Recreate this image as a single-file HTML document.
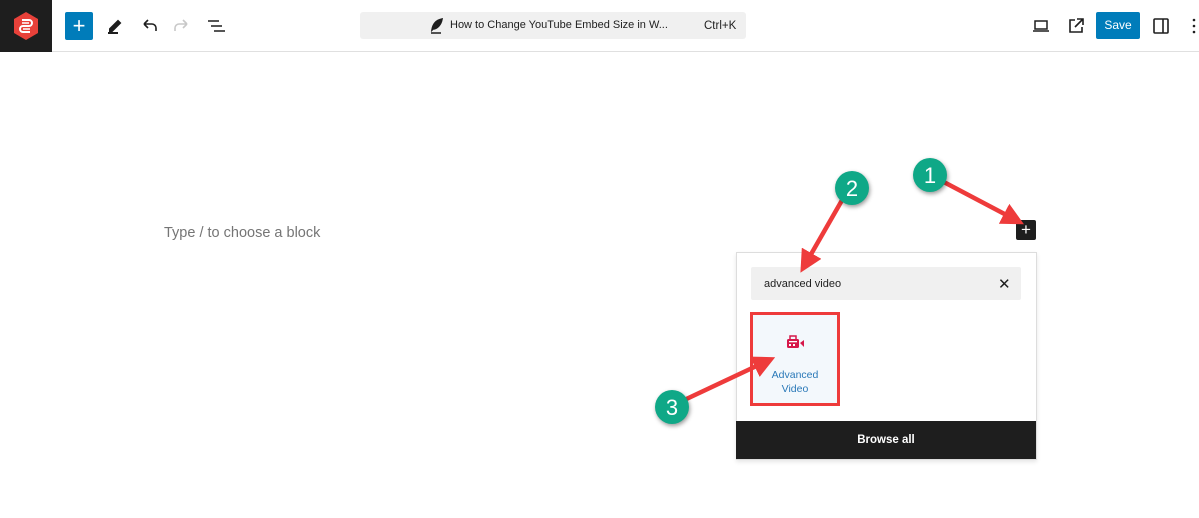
<!DOCTYPE html>
<html><head><style>
body{margin:0;width:1199px;height:518px;background:#fff;font-family:"Liberation Sans",sans-serif;position:relative;overflow:hidden}
.a{position:absolute}
</style></head><body>
<div class="a" style="left:0;top:0;width:1199px;height:51px;border-bottom:1px solid #e0e0e0;background:#fff"></div>
<div class="a" style="left:0;top:0;width:52px;height:52px;background:#1e1e1e"></div>
<svg class="a" style="left:11px;top:11px" width="30" height="30" viewBox="0 0 30 30"><polygon points="15,1 27,8 27,22 15,29 3,22 3,8" fill="#e8413a"/><path d="M11 9h7a3 3 0 0 1 0 6h-6a3 3 0 0 0 0 6h7" stroke="#fff" stroke-width="2" fill="none"/><path d="M11 12h7M12 18h7" stroke="#fff" stroke-width="1.5"/></svg>
<div class="a" style="left:65px;top:12px;width:28px;height:28px;background:#007cba;border-radius:2px;color:#fff;font-size:22px;line-height:27px;text-align:center">+</div>
<svg class="a" style="left:104px;top:16px" width="20" height="20"><path d="M4 17h10M6 13l8-8 2 2-8 8H6z" stroke="#1e1e1e" stroke-width="2" fill="#1e1e1e"/></svg>
<svg class="a" style="left:139px;top:16px" width="20" height="20"><path d="M5 8h8a4 4 0 0 1 4 4v3M5 8l4-4M5 8l4 4" stroke="#1e1e1e" stroke-width="1.6" fill="none"/></svg>
<svg class="a" style="left:172px;top:16px" width="20" height="20"><path d="M15 8H7a4 4 0 0 0-4 4v3M15 8l-4-4M15 8l-4 4" stroke="#c8c8c8" stroke-width="1.6" fill="none"/></svg>
<svg class="a" style="left:206px;top:16px" width="20" height="20"><path d="M2 5h11M5 10h11M8 15h11" stroke="#1e1e1e" stroke-width="1.6"/></svg>
<div class="a" style="left:360px;top:12px;width:386px;height:27px;background:#f0f0f0;border-radius:3px"></div>
<svg class="a" style="left:430px;top:18px" width="14" height="16"><path d="M2 12C3 5 7 2 12 1 11 7 7 11 3 11zM1 15h10" stroke="#1e1e1e" stroke-width="1.6" fill="#1e1e1e"/></svg>
<div class="a" style="left:450px;top:19px;font-size:11px;color:#1e1e1e">How to Change YouTube Embed Size in W...</div>
<div class="a" style="left:704px;top:20px;font-size:11.5px;color:#1e1e1e">Ctrl+K</div>
<svg class="a" style="left:1031px;top:16px" width="20" height="20"><path d="M4 5h12v8H4zM2 15h16" stroke="#1e1e1e" stroke-width="1.5" fill="none"/></svg>
<svg class="a" style="left:1066px;top:16px" width="20" height="20"><path d="M9 4H4v12h12v-5M11 3h6v6M17 3l-8 8" stroke="#1e1e1e" stroke-width="1.6" fill="none"/></svg>
<div class="a" style="left:1096px;top:12px;width:44px;height:27px;background:#007cba;border-radius:2px;color:#fff;font-size:12px;line-height:27px;text-align:center">Save</div>
<svg class="a" style="left:1151px;top:16px" width="20" height="20"><rect x="3" y="3" width="14" height="14" rx="1" stroke="#1e1e1e" stroke-width="1.6" fill="none"/><path d="M12 3v14" stroke="#1e1e1e" stroke-width="1.6"/></svg>
<svg class="a" style="left:1190px;top:16px" width="8" height="20"><circle cx="4" cy="4" r="1.3" fill="#1e1e1e"/><circle cx="4" cy="10" r="1.3" fill="#1e1e1e"/><circle cx="4" cy="16" r="1.3" fill="#1e1e1e"/></svg>
<div class="a" style="left:164px;top:225px;font-size:14.5px;color:#757575">Type / to choose a block</div>
<div class="a" style="left:1016px;top:220px;width:20px;height:20px;background:#1e1e1e;border-radius:2px;color:#fff;font-size:17px;line-height:20px;text-align:center">+</div>
<div class="a" style="left:736px;top:252px;width:299px;height:206px;border:1px solid #ddd;background:#fff;box-shadow:0 2px 4px rgba(0,0,0,.1)"></div>
<div class="a" style="left:751px;top:267px;width:270px;height:33px;background:#f0f0f0;border-radius:2px"></div>
<div class="a" style="left:764px;top:278px;font-size:11px;color:#1e1e1e">advanced video</div>
<div class="a" style="left:998px;top:275px;font-size:15px;color:#1e1e1e">✕</div>
<div class="a" style="left:750px;top:312px;width:84px;height:88px;border:3px solid #ee3b3b;background:#f3f8fc"></div>
<svg class="a" style="left:786px;top:334px" width="20" height="16"><rect x="1" y="5" width="12" height="9" rx="1.5" fill="#d6184a"/><path d="M4 5V2h6v3" stroke="#d6184a" stroke-width="1.5" fill="none"/><path d="M14 9l4-3v7z" fill="#d6184a"/><rect x="3" y="10" width="2" height="2" fill="#fff"/><rect x="7" y="10" width="2" height="2" fill="#fff"/><rect x="3" y="7" width="8" height="1.3" fill="#fff"/></svg>
<div class="a" style="left:753px;top:368px;width:84px;text-align:center;font-size:10.5px;line-height:14px;color:#2a79b8">Advanced<br>Video</div>
<div class="a" style="left:736px;top:421px;width:300px;height:38px;background:#1e1e1e;color:#fff;font-size:11.5px;font-weight:bold;line-height:38px;text-align:center">Browse all</div>
<svg class="a" style="left:0;top:0" width="1199" height="518">
<defs><marker id="m" markerWidth="5" markerHeight="5" refX="2.5" refY="2.5" orient="auto"><path d="M0 0L5 2.5 0 5z" fill="#ee3b3b"/></marker></defs>
<g stroke="#ee3b3b" stroke-width="4.5" fill="none" marker-end="url(#m)">
<line x1="940" y1="180" x2="1014" y2="219"/>
<line x1="845" y1="195" x2="806" y2="263"/>
<line x1="680" y1="402" x2="765" y2="362"/>
</g>
<g fill="#0fa887"><circle cx="930" cy="175" r="17" style="filter:drop-shadow(1px 2px 2px rgba(0,0,0,.4))"/><circle cx="852" cy="188" r="17" style="filter:drop-shadow(1px 2px 2px rgba(0,0,0,.4))"/><circle cx="672" cy="407" r="17" style="filter:drop-shadow(1px 2px 2px rgba(0,0,0,.4))"/></g>
<g fill="#fff" font-family="Liberation Sans" font-size="22" text-anchor="middle"><text x="930" y="183">1</text><text x="852" y="196">2</text><text x="672" y="415">3</text></g>
</svg>
</body></html>
